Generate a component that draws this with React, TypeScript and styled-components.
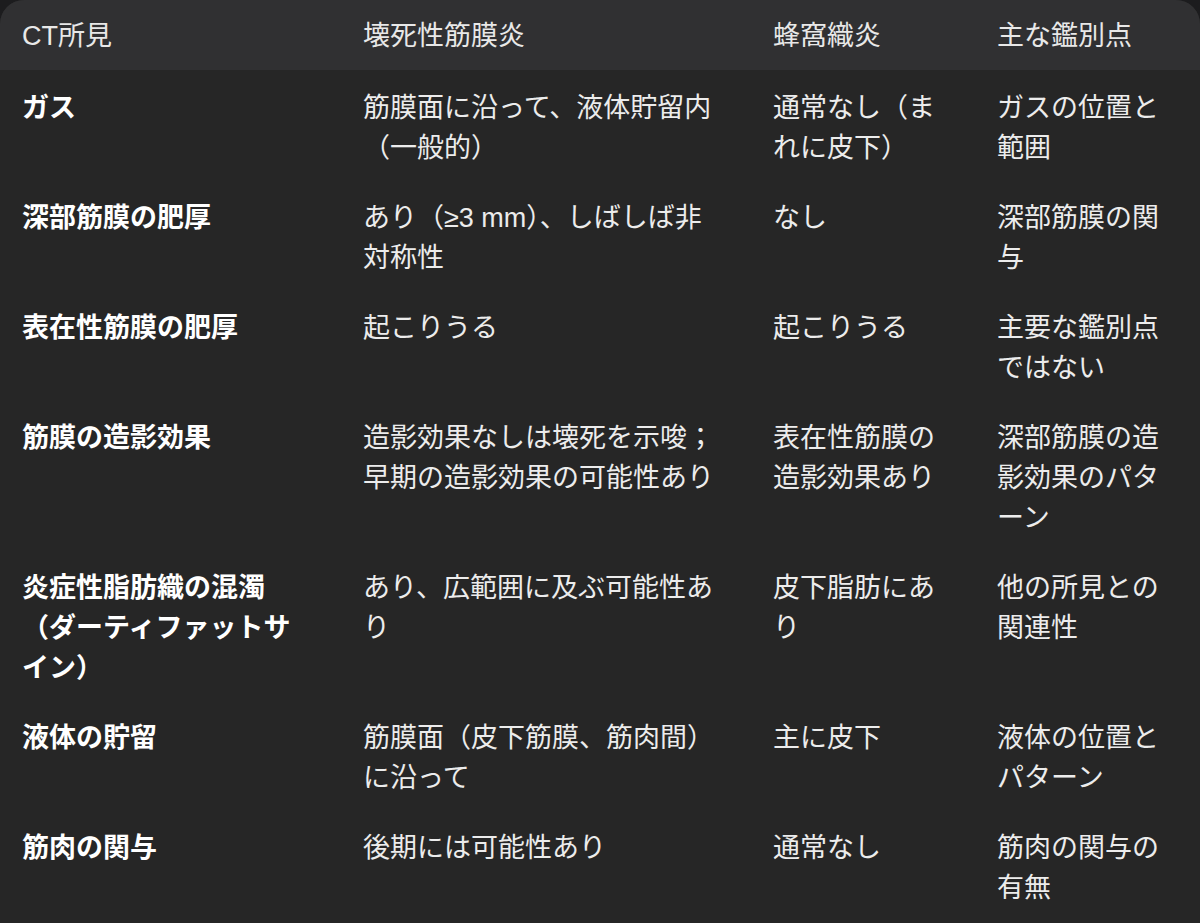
import React from 'react';
import styled, { createGlobalStyle } from 'styled-components';

type Row = [string, string, string, string];

const COLUMNS = [
  { width: 341, pr: 56 },
  { width: 410, pr: 45 },
  { width: 224, pr: 49 },
  { width: 203, pr: 20 },
];

const HEADERS = ['CT所見', '壊死性筋膜炎', '蜂窩織炎', '主な鑑別点'];

const ROWS: Row[] = [
  ['ガス', '筋膜面に沿って、液体貯留内（一般的）', '通常なし（まれに皮下）', 'ガスの位置と範囲'],
  ['深部筋膜の肥厚', 'あり（≥3 mm）、しばしば非対称性', 'なし', '深部筋膜の関与'],
  ['表在性筋膜の肥厚', '起こりうる', '起こりうる', '主要な鑑別点ではない'],
  ['筋膜の造影効果', '造影効果なしは壊死を示唆；早期の造影効果の可能性あり', '表在性筋膜の造影効果あり', '深部筋膜の造影効果のパターン'],
  ['炎症性脂肪織の混濁（ダーティファットサイン）', 'あり、広範囲に及ぶ可能性あり', '皮下脂肪にあり', '他の所見との関連性'],
  ['液体の貯留', '筋膜面（皮下筋膜、筋肉間）に沿って', '主に皮下', '液体の位置とパターン'],
  ['筋肉の関与', '後期には可能性あり', '通常なし', '筋肉の関与の有無'],
];

const App = () => {
  return (
    <>
      <GlobalStyle />
      <Table>
        <HeaderRow>
          {HEADERS.map((text, i) => (
            <Cell key={text} $pr={COLUMNS[i].pr}>{text}</Cell>
          ))}
        </HeaderRow>
        {ROWS.map((row) => (
          <BodyRow key={row[0]}>
            {row.map((text, i) => (
              <Cell key={i} $pr={COLUMNS[i].pr} $bold={i === 0}>{text}</Cell>
            ))}
          </BodyRow>
        ))}
      </Table>
    </>
  );
};

const GlobalStyle = createGlobalStyle`
  html, body {
    margin: 0;
    padding: 0;
    background: #1c1c1e;
  }

  body {
    font-family: "Liberation Sans", "Noto Sans CJK JP", sans-serif;
    -webkit-font-smoothing: antialiased;
  }
`;

const Table = styled.div`
  background-color: #262626;
  border-radius: 24px 24px 0 0;
  height: 923px;
  overflow: hidden;
  width: 1200px;
`;

const rowGrid = COLUMNS.map((c) => `${c.width}px`).join(' ');

const HeaderRow = styled.div`
  background-color: #303032;
  color: #e8e8e8;
  display: grid;
  grid-template-columns: ${rowGrid};
  padding: 16px 0 14px 22px;
`;

const BodyRow = styled.div`
  color: #ececec;
  display: grid;
  grid-template-columns: ${rowGrid};
  padding: 18px 0 12px 22px;
`;

const Cell = styled.div<{ $pr: number; $bold?: boolean }>`
  font-size: 27px;
  font-weight: ${({ $bold }) => ($bold ? 700 : 400)};
  color: ${({ $bold }) => ($bold ? '#ffffff' : 'inherit')};
  line-break: strict;
  line-height: 40px;
  padding-right: ${({ $pr }) => $pr}px;
`;

export default App;
